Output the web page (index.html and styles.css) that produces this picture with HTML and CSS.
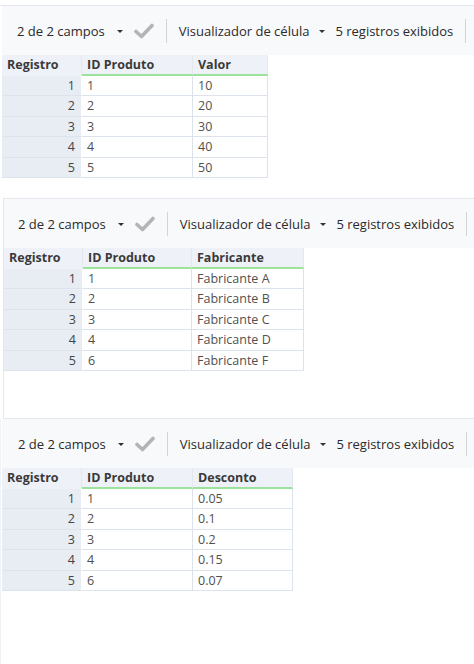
FILE: index.html
```html
<!DOCTYPE html>
<html lang="pt">
<head>
<meta charset="utf-8">
<title>Registros</title>
<link rel="stylesheet" href="styles.css">
</head>
<body>
<div class="panel p1">
  <div class="toolbar">
    <span class="tb-text fields">2 de 2 campos</span>
    <span class="caret c1"></span>
    <svg class="check" width="20" height="16" viewBox="0 0 20 16"><path d="M2 8.5 L7.5 13.5 L18 2.5" fill="none" stroke="#b4b4b4" stroke-width="3.6" stroke-linecap="round" stroke-linejoin="round"/></svg>
    <span class="sep s1"></span>
    <span class="tb-text viewer">Visualizador de célula</span>
    <span class="caret c2"></span>
    <span class="tb-text count">5 registros exibidos</span>
    <span class="sep s2"></span>
  </div>
  <div class="grid">
    <div class="row head">
      <div class="cell rec">Registro</div><div class="cell c-id">ID Produto</div><div class="cell c-v1">Valor</div>
    </div>
    <div class="row"><div class="cell rec">1</div><div class="cell c-id">1</div><div class="cell c-v1">10</div></div>
    <div class="row"><div class="cell rec">2</div><div class="cell c-id">2</div><div class="cell c-v1">20</div></div>
    <div class="row"><div class="cell rec">3</div><div class="cell c-id">3</div><div class="cell c-v1">30</div></div>
    <div class="row"><div class="cell rec">4</div><div class="cell c-id">4</div><div class="cell c-v1">40</div></div>
    <div class="row"><div class="cell rec">5</div><div class="cell c-id">5</div><div class="cell c-v1">50</div></div>
  </div>
</div>

<div class="panel p2">
  <div class="toolbar">
    <span class="tb-text fields">2 de 2 campos</span>
    <span class="caret c1"></span>
    <svg class="check" width="20" height="16" viewBox="0 0 20 16"><path d="M2 8.5 L7.5 13.5 L18 2.5" fill="none" stroke="#b4b4b4" stroke-width="3.6" stroke-linecap="round" stroke-linejoin="round"/></svg>
    <span class="sep s1"></span>
    <span class="tb-text viewer">Visualizador de célula</span>
    <span class="caret c2"></span>
    <span class="tb-text count">5 registros exibidos</span>
    <span class="sep s2"></span>
  </div>
  <div class="grid">
    <div class="row head">
      <div class="cell rec">Registro</div><div class="cell c-id">ID Produto</div><div class="cell c-v2">Fabricante</div>
    </div>
    <div class="row"><div class="cell rec">1</div><div class="cell c-id">1</div><div class="cell c-v2">Fabricante A</div></div>
    <div class="row"><div class="cell rec">2</div><div class="cell c-id">2</div><div class="cell c-v2">Fabricante B</div></div>
    <div class="row"><div class="cell rec">3</div><div class="cell c-id">3</div><div class="cell c-v2">Fabricante C</div></div>
    <div class="row"><div class="cell rec">4</div><div class="cell c-id">4</div><div class="cell c-v2">Fabricante D</div></div>
    <div class="row"><div class="cell rec">5</div><div class="cell c-id">6</div><div class="cell c-v2">Fabricante F</div></div>
  </div>
</div>

<div class="panel p3">
  <div class="toolbar">
    <span class="tb-text fields">2 de 2 campos</span>
    <span class="caret c1"></span>
    <svg class="check" width="20" height="16" viewBox="0 0 20 16"><path d="M2 8.5 L7.5 13.5 L18 2.5" fill="none" stroke="#b4b4b4" stroke-width="3.6" stroke-linecap="round" stroke-linejoin="round"/></svg>
    <span class="sep s1"></span>
    <span class="tb-text viewer">Visualizador de célula</span>
    <span class="caret c2"></span>
    <span class="tb-text count">5 registros exibidos</span>
    <span class="sep s2"></span>
  </div>
  <div class="grid">
    <div class="row head">
      <div class="cell rec">Registro</div><div class="cell c-id">ID Produto</div><div class="cell c-v3">Desconto</div>
    </div>
    <div class="row"><div class="cell rec">1</div><div class="cell c-id">1</div><div class="cell c-v3">0.05</div></div>
    <div class="row"><div class="cell rec">2</div><div class="cell c-id">2</div><div class="cell c-v3">0.1</div></div>
    <div class="row"><div class="cell rec">3</div><div class="cell c-id">3</div><div class="cell c-v3">0.2</div></div>
    <div class="row"><div class="cell rec">4</div><div class="cell c-id">4</div><div class="cell c-v3">0.15</div></div>
    <div class="row"><div class="cell rec">5</div><div class="cell c-id">6</div><div class="cell c-v3">0.07</div></div>
  </div>
</div>
</body>
</html>
```

FILE: styles.css
```css
* { box-sizing: border-box; }
html, body {
  margin: 0;
  padding: 0;
  background: #ffffff;
}
body {
  width: 474px;
  height: 664px;
  overflow: hidden;
  font-family: "Open Sans", "Noto Sans", sans-serif;
  color: #333;
}

.panel {
  border-top: 1px solid #e4e7ec;
}
.p1 {
  margin-top: 5px;
  padding-left: 2px;
  height: 193px;
}
.p2 {
  margin-left: 3px;
  border-left: 1px solid #e4e7ec;
  border-bottom: 1px solid #e4e7ec;
  height: 221px;
}
.p3 {
  border-top: none;
  padding-left: 1px;
  border-left: 1px solid #f0f2f5;
  height: 245px;
}

.toolbar {
  height: 49px;
  background: #f8f9fb;
  display: flex;
  align-items: center;
  padding-left: 15px;
  white-space: nowrap;
}
.p2 .toolbar { padding-left: 14px; }
.p3 .toolbar { padding-left: 16px; }

.tb-text {
  font-size: 13px;
  color: #2a2a2a;
}
.caret {
  width: 0;
  height: 0;
  border-left: 3px solid transparent;
  border-right: 3px solid transparent;
  border-top: 3px solid #333;
  margin-top: 1px;
}
.c1 { margin-left: 12px; }
.check { margin-left: 11px; }
.sep {
  width: 1px;
  height: 24px;
  background: #d2d4d8;
}
.s1 { margin-left: 12px; margin-right: 12px; }
.c2 { margin-left: 10px; margin-right: 10px; }
.s2 { margin-left: 12px; }

.grid {
  display: flex;
  flex-direction: column;
  font-size: 12.5px;
}
.row {
  display: flex;
  height: 20.5px;
}
.cell {
  display: flex;
  align-items: center;
  padding-left: 5px;
  color: #505050;
  border-bottom: 1px solid #dde3ec;
  border-right: 1px solid #dde3ec;
  background: #fff;
}
.cell.rec {
  width: 80px;
  background: #e8ecf3;
  justify-content: flex-end;
  padding-right: 6px;
  border-right: 1px solid #fff;
  border-bottom: 1px solid #dde3ec;
  color: #444;
}
.c-id { width: 111px; }
.c-v1 { width: 75px; }
.c-v2 { width: 112px; }
.c-v3 { width: 100px; }
.p2 .cell.rec { width: 79px; }
.p2 .c-id { width: 109px; }

.head .cell {
  background: #eef1f7;
  font-weight: 700;
  color: #3a3a3a;
  border-right: 1px solid #e3e7ee;
  border-bottom: 2px solid #9be39b;
}
.head .cell.rec {
  justify-content: flex-start;
  padding-left: 5px;
  border-bottom: 2px solid #eef1f7;
  border-right: 1px solid #e3e7ee;
}
```
